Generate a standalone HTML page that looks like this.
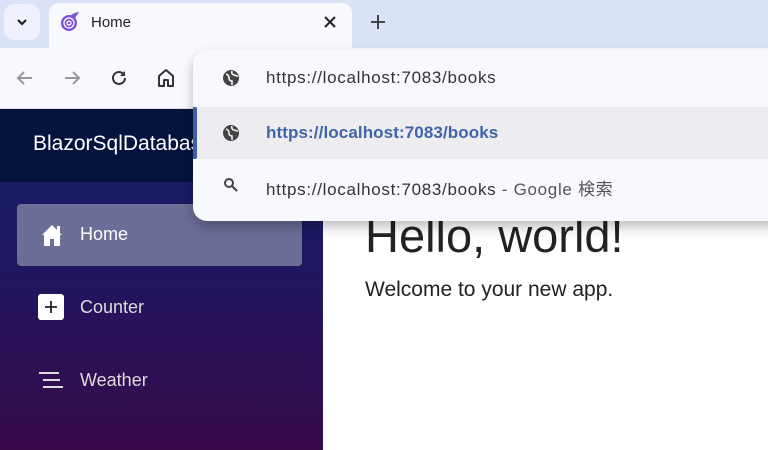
<!DOCTYPE html>
<html><head><meta charset="utf-8"><style>
*{margin:0;padding:0;box-sizing:border-box}
body{width:768px;height:450px;overflow:hidden;background:#fff;font-family:"Liberation Sans","Noto Sans CJK JP",sans-serif;position:relative}
.abs{position:absolute}
.u{font-size:17px;letter-spacing:0.7px}
</style></head><body>
<div class="abs" style="left:0;top:0;width:768px;height:48px;background:#dae2f7"></div>
<div class="abs" style="left:4px;top:4px;width:36px;height:36px;border-radius:10px;background:#eef1fb"></div>
<svg class="abs" style="left:15px;top:15px" width="14" height="14" viewBox="0 0 14 14"><path d="M3 5l4 4 4-4" stroke="#222" stroke-width="2.2" fill="none"/></svg>
<div class="abs" style="left:49px;top:3px;width:303px;height:46px;border-radius:10px 10px 0 0;background:#f8f9fe"></div>
<svg class="abs" style="left:59px;top:12px" width="22" height="20" viewBox="0 0 22 20"><circle cx="10" cy="11" r="8" fill="#7b4fe0"/><path d="M12 3q5-3 8-3q-2 3-4 6z" fill="#7b4fe0"/><circle cx="10" cy="11" r="5" fill="none" stroke="#fff" stroke-width="1.3"/><circle cx="10" cy="11" r="2" fill="none" stroke="#fff" stroke-width="1.3"/></svg>
<div class="abs" style="left:91px;top:14px;font-size:15px;color:#222">Home</div>
<svg class="abs" style="left:323px;top:15px" width="14" height="14" viewBox="0 0 14 14"><path d="M2 2l10 10M12 2L2 12" stroke="#222" stroke-width="2"/></svg>
<svg class="abs" style="left:370px;top:14px" width="16" height="16" viewBox="0 0 16 16"><path d="M8 1v14M1 8h14" stroke="#333" stroke-width="1.8"/></svg>
<div class="abs" style="left:0;top:48px;width:768px;height:61px;background:#f8f9fe;border-bottom:1px solid #ddd"></div>
<svg class="abs" style="left:15px;top:68px" width="20" height="20" viewBox="0 0 20 20"><path d="M17 10H3M9 4l-6 6 6 6" stroke="#999" stroke-width="2" fill="none"/></svg>
<svg class="abs" style="left:62px;top:68px" width="20" height="20" viewBox="0 0 20 20"><path d="M3 10h14M11 4l6 6-6 6" stroke="#999" stroke-width="2" fill="none"/></svg>
<svg class="abs" style="left:109px;top:68px" width="20" height="20" viewBox="0 0 20 20"><path d="M16 10a6 6 0 1 1-2-4.5" stroke="#333" stroke-width="2" fill="none"/><path d="M16 3v5h-5z" fill="#333"/></svg>
<svg class="abs" style="left:156px;top:67px" width="20" height="22" viewBox="0 0 20 22"><path d="M3 9l7-6 7 6v10h-5v-6H8v6H3z" stroke="#333" stroke-width="2" fill="none" stroke-linejoin="round"/></svg>
<div class="abs" style="left:0;top:109px;width:323px;height:341px;background:linear-gradient(180deg,#14206a 0%,#1f1760 45%,#370a4c 100%)"></div>
<div class="abs" style="left:0;top:109px;width:323px;height:73px;background:#04143d"></div>
<div class="abs" style="left:33px;top:132px;font-size:21px;color:#fff">BlazorSqlDatabase</div>
<div class="abs" style="left:17px;top:204px;width:285px;height:62px;border-radius:4px;background:#6b6e96"></div>
<svg class="abs" style="left:40px;top:222px" width="24" height="26" viewBox="0 0 24 26"><path d="M2 13L12 3l5 5V4h3v7l2 2h-2v11h-6v-7h-4v7H4V13z" fill="#fff"/></svg>
<div class="abs" style="left:80px;top:224px;font-size:18px;color:#fff">Home</div>
<div class="abs" style="left:38px;top:294px;width:26px;height:26px;border-radius:3px;background:#fff"></div>
<svg class="abs" style="left:38px;top:294px" width="26" height="26" viewBox="0 0 26 26"><path d="M13 7v12M7 13h12" stroke="#222" stroke-width="1.8"/></svg>
<div class="abs" style="left:80px;top:297px;font-size:18px;color:#ddd">Counter</div>
<svg class="abs" style="left:38px;top:370px" width="26" height="22" viewBox="0 0 26 22"><path d="M1 3h20M5 10h17M5 17h20" stroke="#ddd" stroke-width="2"/></svg>
<div class="abs" style="left:80px;top:370px;font-size:18px;color:#ddd">Weather</div>
<div class="abs" style="left:365px;top:208px;font-size:47px;color:#222">Hello, world!</div>
<div class="abs" style="left:365px;top:278px;font-size:21px;color:#222">Welcome to your new app.</div>
<div class="abs" style="left:193px;top:50px;width:600px;height:171px;border-radius:14px;background:#f8f9fe;box-shadow:0 6px 12px rgba(0,0,0,.25);overflow:hidden">
 <div class="abs" style="left:0;top:57px;width:600px;height:52px;background:#ececf1"></div>
 <div class="abs" style="left:0;top:57px;width:4px;height:52px;background:#3f5ea3;border-radius:0 2px 2px 0"></div>
 <svg class="abs" style="left:29px;top:19px" width="18" height="18" viewBox="0 0 18 18"><circle cx="9" cy="9" r="8" fill="#444"/><path d="M4 5q3 1 3 4t3 3v4M10 2q-1 3 2 4t4 1" stroke="#f8f9fe" stroke-width="1.6" fill="none"/></svg>
 <svg class="abs" style="left:29px;top:74px" width="18" height="18" viewBox="0 0 18 18"><circle cx="9" cy="9" r="8" fill="#444"/><path d="M4 5q3 1 3 4t3 3v4M10 2q-1 3 2 4t4 1" stroke="#ececf1" stroke-width="1.6" fill="none"/></svg>
 <svg class="abs" style="left:30px;top:127px" width="16" height="16" viewBox="0 0 16 16"><circle cx="6" cy="6" r="4" stroke="#444" stroke-width="2" fill="none"/><path d="M9 9l5 5" stroke="#444" stroke-width="2.2"/></svg>
 <div class="abs u" style="left:73px;top:18px;color:#333">https://localhost:7083/books</div>
 <div class="abs u" style="left:73px;top:73px;color:#3f64a8;font-weight:bold;letter-spacing:0.1px">https://localhost:7083/books</div>
 <div class="abs u" style="left:73px;top:125px;color:#333">https://localhost:7083/books <span style="color:#555">- Google 検索</span></div>
</div>
</body></html>
